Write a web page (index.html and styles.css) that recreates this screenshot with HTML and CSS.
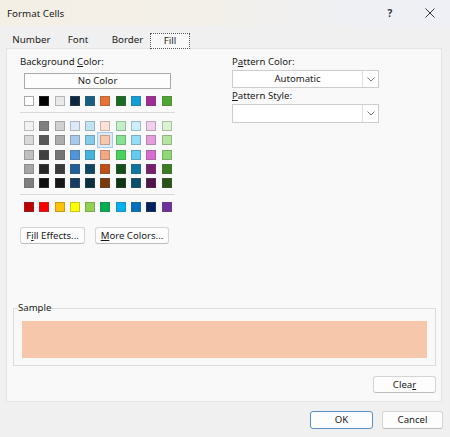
FILE: index.html
```html
<!DOCTYPE html>
<html>
<head>
<meta charset="utf-8">
<title>Format Cells</title>
<link rel="stylesheet" href="styles.css">
</head>
<body>
<div class="window">
  <div class="titlebar">
    <span class="title">Format Cells</span>
    <span class="help">?</span>
    <span class="close"><svg width="10" height="10" viewBox="0 0 10 10"><path d="M0.5 0.5L9.5 9.5M9.5 0.5L0.5 9.5" stroke="#3a3a3a" stroke-width="1" fill="none"/></svg></span>
  </div>
  <div class="tabs">
    <div class="tab t1">Number</div>
    <div class="tab t2">Font</div>
    <div class="tab t3">Border</div>
    <div class="tab active"><span class="focus">Fill</span></div>
  </div>
  <div class="panel">
    <div class="cols">
      <div class="left">
        <div class="label">Background <u>C</u>olor:</div>
        <div class="nocolor">No Color</div>
        <div class="swatches row0">
          <span class="sw" style="background:#FFFFFF"></span>
          <span class="sw" style="background:#000000"></span>
          <span class="sw" style="background:#E8E8E8"></span>
          <span class="sw" style="background:#0E2841"></span>
          <span class="sw" style="background:#156082"></span>
          <span class="sw" style="background:#E97132"></span>
          <span class="sw" style="background:#196B24"></span>
          <span class="sw" style="background:#0F9ED5"></span>
          <span class="sw" style="background:#A02B93"></span>
          <span class="sw" style="background:#4EA72E"></span>
        </div>
        <div class="sep"></div>
        <div class="swatches theme">
          <span class="sw" style="background:#F2F2F2"></span>
          <span class="sw" style="background:#7F7F7F"></span>
          <span class="sw" style="background:#D0D0D0"></span>
          <span class="sw" style="background:#DCEAF7"></span>
          <span class="sw" style="background:#C1E4F5"></span>
          <span class="sw" style="background:#FBE2D5"></span>
          <span class="sw" style="background:#C1F0C8"></span>
          <span class="sw" style="background:#CAEEFB"></span>
          <span class="sw" style="background:#F2CEEF"></span>
          <span class="sw" style="background:#D9F2D0"></span>

          <span class="sw" style="background:#D9D9D9"></span>
          <span class="sw" style="background:#595959"></span>
          <span class="sw" style="background:#ADADAD"></span>
          <span class="sw" style="background:#A6CAEC"></span>
          <span class="sw" style="background:#83CAEB"></span>
          <span class="sw selected" style="background:#F7C7AC"></span>
          <span class="sw" style="background:#84E291"></span>
          <span class="sw" style="background:#95DCF7"></span>
          <span class="sw" style="background:#E59EDD"></span>
          <span class="sw" style="background:#B4E5A2"></span>

          <span class="sw" style="background:#BFBFBF"></span>
          <span class="sw" style="background:#404040"></span>
          <span class="sw" style="background:#757575"></span>
          <span class="sw" style="background:#4E95D9"></span>
          <span class="sw" style="background:#44B3E1"></span>
          <span class="sw" style="background:#F1A983"></span>
          <span class="sw" style="background:#47D45A"></span>
          <span class="sw" style="background:#61CBF3"></span>
          <span class="sw" style="background:#D86DCD"></span>
          <span class="sw" style="background:#8ED973"></span>

          <span class="sw" style="background:#A6A6A6"></span>
          <span class="sw" style="background:#262626"></span>
          <span class="sw" style="background:#3A3A3A"></span>
          <span class="sw" style="background:#215F9A"></span>
          <span class="sw" style="background:#0F4761"></span>
          <span class="sw" style="background:#C04F15"></span>
          <span class="sw" style="background:#124F1A"></span>
          <span class="sw" style="background:#0B769F"></span>
          <span class="sw" style="background:#77206D"></span>
          <span class="sw" style="background:#3B7D23"></span>

          <span class="sw" style="background:#808080"></span>
          <span class="sw" style="background:#0D0D0D"></span>
          <span class="sw" style="background:#171717"></span>
          <span class="sw" style="background:#153D64"></span>
          <span class="sw" style="background:#0A2F41"></span>
          <span class="sw" style="background:#7A3A0D"></span>
          <span class="sw" style="background:#0C3511"></span>
          <span class="sw" style="background:#074F6A"></span>
          <span class="sw" style="background:#4F1549"></span>
          <span class="sw" style="background:#275317"></span>
        </div>
        <div class="sep"></div>
        <div class="swatches std">
          <span class="sw" style="background:#C00000"></span>
          <span class="sw" style="background:#FF0000"></span>
          <span class="sw" style="background:#FFC000"></span>
          <span class="sw" style="background:#FFFF00"></span>
          <span class="sw" style="background:#92D050"></span>
          <span class="sw" style="background:#00B050"></span>
          <span class="sw" style="background:#00B0F0"></span>
          <span class="sw" style="background:#0070C0"></span>
          <span class="sw" style="background:#002060"></span>
          <span class="sw" style="background:#7030A0"></span>
        </div>
        <div class="btnrow">
          <button class="btn fx">F<u>i</u>ll Effects...</button>
          <button class="btn more"><u>M</u>ore Colors...</button>
        </div>
      </div>
      <div class="right">
        <div class="label">P<u>a</u>ttern Color:</div>
        <div class="select first">
          <span class="val">Automatic</span>
          <span class="arrow"><svg width="8" height="5" viewBox="0 0 8 5"><path d="M0.5 0.5L4 4L7.5 0.5" stroke="#7a7a7a" stroke-width="1" fill="none"/></svg></span>
        </div>
        <div class="label second"><u>P</u>attern Style:</div>
        <div class="select">
          <span class="val"></span>
          <span class="arrow"><svg width="8" height="5" viewBox="0 0 8 5"><path d="M0.5 0.5L4 4L7.5 0.5" stroke="#7a7a7a" stroke-width="1" fill="none"/></svg></span>
        </div>
      </div>
    </div>
    <fieldset class="sample">
      <legend>Sample</legend>
      <div class="fill"></div>
    </fieldset>
    <div class="clearrow">
      <button class="btn clear">Clea<u>r</u></button>
    </div>
  </div>
  <div class="footer">
    <button class="btn ok">OK</button>
    <button class="btn cancel">Cancel</button>
  </div>
</div>
</body>
</html>
```

FILE: styles.css
```css
* { box-sizing: border-box; }
html, body {
  margin: 0;
  padding: 0;
}
body {
  width: 450px;
  height: 437px;
  overflow: hidden;
  background: #f0f0f0;
  font-family: "Noto Sans", "Open Sans", sans-serif;
  font-size: 9.6px;
  color: #1a1a1a;
}
u { text-decoration: underline; text-underline-offset: 1px; }

.window {
  width: 450px;
  height: 437px;
  background: #f0f0f0;
  border-bottom-right-radius: 7px;
}

.titlebar {
  height: 26px;
  display: flex;
  align-items: center;
  padding-left: 7px;
  background: linear-gradient(90deg, #f4efe5 0%, #f3f0e9 45%, #eff0f3 75%, #eef0f5 100%);
}
.title { flex: 1; font-size: 9.8px; color: #1b1b1b; }
.help {
  font-size: 10px;
  font-weight: bold;
  color: #333;
  width: 10px;
  text-align: center;
  margin-right: 30px;
}
.close {
  display: flex;
  width: 10px;
  height: 10px;
  margin-right: 15px;
}

.tabs {
  height: 22px;
  display: flex;
  align-items: flex-end;
  padding-left: 6px;
}
.tab {
  height: 15px;
  line-height: 14px;
  text-align: center;
  font-size: 9.8px;
  color: #1b1b1b;
}
.t1 { width: 51px; }
.t2 { width: 42px; }
.t3 { width: 51px; padding-left: 6px; }
.tab.active {
  width: 40px;
  height: 16px;
  margin-bottom: -1px;
  background: #f9f9f9;
  position: relative;
  z-index: 1;
  display: flex;
}
.focus {
  flex: 1;
  border: 1px dotted #555;
  line-height: 13px;
}

.panel {
  margin-left: 6px;
  width: 436px;
  height: 354px;
  background: #f9f9f9;
  border: 1px solid #e3e3e3;
  padding: 6px 0 0 13px;
}
.cols {
  display: flex;
  gap: 57px;
}
.left { width: 155px; }
.right { width: 147px; }
.label {
  line-height: 14px;
  height: 14px;
}

.nocolor {
  margin: 4px 0 0 4px;
  width: 147px;
  height: 16px;
  border: 1px solid #a9a9a9;
  background: #fdfdfd;
  text-align: center;
  line-height: 14px;
}

.swatches {
  margin-left: 4px;
  display: grid;
  grid-template-columns: repeat(10, 10px);
  column-gap: 5.3px;
  row-gap: 4.3px;
}
.row0 { margin-top: 7px; }
.theme { margin-top: 8px; }
.std { margin-top: 7px; }
.sw {
  width: 10px;
  height: 10px;
  border: 1px solid rgba(90, 90, 90, 0.35);
  display: block;
}
.row0 .sw:first-child { border-color: #a8a8a8; }
.sw.selected {
  outline: 1px solid #a9cbe9;
  outline-offset: 2px;
  box-shadow: 0 0 0 2px #dde9f5;
}
.sep {
  margin-top: 6px;
  height: 1px;
  background: #d9d9d9;
}

.btn {
  font-family: inherit;
  font-size: 9.6px;
  color: #1b1b1b;
  background: #fdfdfd;
  border: 1px solid #d4d4d4;
  border-bottom-color: #bdbdbd;
  border-radius: 3px;
  padding: 0;
  margin: 0;
  line-height: 14px;
}
.btnrow {
  margin-top: 15px;
  display: flex;
  gap: 10px;
}
.fx { width: 65px; height: 17px; }
.more { width: 74px; height: 17px; }

.select {
  margin-top: 1px;
  height: 18px;
  border: 1px solid #cdcdcd;
  background: #fff;
  display: flex;
}
.select .val {
  flex: 1;
  text-align: center;
  line-height: 16px;
}
.select .arrow {
  width: 16px;
  border-left: 1px solid #e0e0e0;
  display: flex;
  align-items: center;
  justify-content: center;
}
.label.second { margin-top: 1px; }
.select:last-child { height: 19px; }

.sample {
  margin: 58px 0 0 -7px;
  width: 423px;
  border: 1px solid #dcdcdc;
  padding: 0 4px 7px 4px;
}
.sample legend {
  padding: 0;
  line-height: 12px;
}
.fill {
  margin: 7px 0 0 4px;
  width: 405px;
  height: 37px;
  background: #F7C7AC;
}

.clearrow {
  display: flex;
  justify-content: flex-end;
  margin-top: 10px;
  padding-right: 5px;
}
.clear { width: 63px; height: 17px; }

.footer {
  display: flex;
  justify-content: flex-end;
  gap: 9px;
  padding: 9px 7px 0 0;
}
.ok {
  width: 63px;
  height: 18px;
  border: 1px solid #5a8cc6;
}
.cancel { width: 61px; height: 18px; }
```
